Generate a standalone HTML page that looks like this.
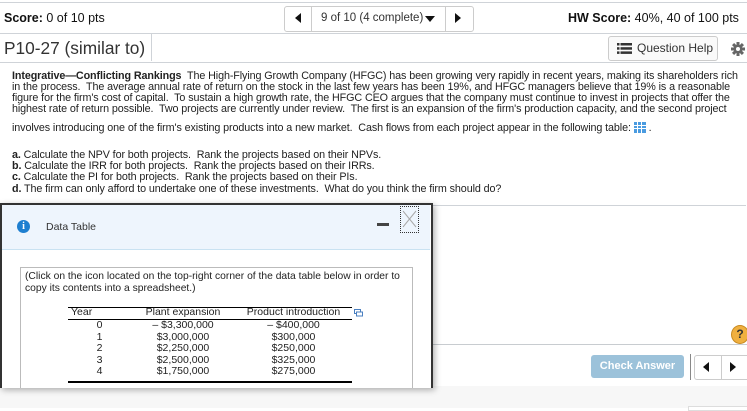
<!DOCTYPE html>
<html><head><style>
body{margin:0;width:747px;height:408px;position:relative;overflow:hidden;background:#fff;font-family:"Liberation Sans",Arial,sans-serif;color:#222}
.a{position:absolute;white-space:nowrap}
.hl{position:absolute;height:1px;background:#cfd3d8}
.t{font-size:10.75px;letter-spacing:-0.1px;left:12px;position:absolute;white-space:nowrap;color:#222}
td{padding:0;line-height:11.5px;font-size:10.5px}
</style></head><body>
<div class="hl" style="top:2px;left:0;width:747px"></div>
<div class="a" style="left:4px;top:11px;font-size:12.5px;color:#111"><b>Score:</b> 0 of 10 pts</div>
<div class="a" style="left:284px;top:6px;width:188px;height:24px;border:1px solid #ccc;border-radius:3px;background:#fff"></div>
<div class="a" style="left:311px;top:6px;width:1px;height:25px;background:#ccc"></div>
<div class="a" style="left:445px;top:6px;width:1px;height:25px;background:#ccc"></div>
<div class="a" style="left:295px;top:13px;border-right:6px solid #111;border-top:5px solid transparent;border-bottom:5px solid transparent"></div>
<div class="a" style="left:455px;top:13px;border-left:6px solid #111;border-top:5px solid transparent;border-bottom:5px solid transparent"></div>
<div class="a" style="left:321px;top:12px;font-size:11.5px;color:#333">9 of 10 (4 complete)</div>
<div class="a" style="left:425px;top:16px;border-top:6px solid #111;border-left:5px solid transparent;border-right:5px solid transparent"></div>
<div class="a" style="left:568px;top:11px;font-size:12.5px;color:#111"><b>HW Score:</b> 40%, 40 of 100 pts</div>
<div class="hl" style="top:33px;left:0;width:747px"></div>
<div class="a" style="left:4px;top:38px;font-size:17.3px;color:#333">P10-27 (similar to)</div>
<div class="a" style="left:151px;top:34px;width:1px;height:27px;background:#cfd3d8"></div>
<div class="a" style="left:608px;top:36px;width:108px;height:23px;border:1px solid #ccc;border-radius:3px;background:#fafafa"></div>
<svg class="a" style="left:617px;top:43px" width="15" height="11"><g fill="#333"><rect x="0" y="0" width="2.5" height="2.5"/><rect x="0" y="4.2" width="2.5" height="2.5"/><rect x="0" y="8.4" width="2.5" height="2.5"/><rect x="3.5" y="0" width="11.5" height="2.5"/><rect x="3.5" y="4.2" width="11.5" height="2.5"/><rect x="3.5" y="8.4" width="11.5" height="2.5"/></g></svg>
<div class="a" style="left:637px;top:41px;font-size:12px;color:#333">Question Help</div>
<svg class="a" style="left:731px;top:42px" width="14" height="14" viewBox="0 0 14 14"><g fill="#666"><circle cx="7" cy="7" r="4.5"/><rect x="5.5" y="0" width="3" height="14"/><rect x="0" y="5.5" width="14" height="3"/><rect x="5.5" y="0" width="3" height="14" transform="rotate(45 7 7)"/><rect x="5.5" y="0" width="3" height="14" transform="rotate(-45 7 7)"/></g><circle cx="7" cy="7" r="2" fill="#fff"/></svg>
<div class="hl" style="top:62px;left:0;width:747px"></div>

<div class="t" style="top:70px"><b>Integrative—Conflicting Rankings</b>&nbsp; The High-Flying Growth Company (HFGC) has been growing very rapidly in recent years, making its shareholders rich</div>
<div class="t" style="top:81px">in the process.&nbsp; The average annual rate of return on the stock in the last few years has been 19%, and HFGC managers believe that 19% is a reasonable</div>
<div class="t" style="top:92px">figure for the firm's cost of capital.&nbsp; To sustain a high growth rate, the HFGC CEO argues that the company must continue to invest in projects that offer the</div>
<div class="t" style="top:103px">highest rate of return possible.&nbsp; Two projects are currently under review.&nbsp; The first is an expansion of the firm's production capacity, and the second project</div>
<div class="t" style="top:122px">involves introducing one of the firm's existing products into a new market.&nbsp; Cash flows from each project appear in the following table: <span style="display:inline-block;width:12px;height:11px;background:#4a9be0;vertical-align:-2px;background-image:linear-gradient(90deg,transparent 3px,#fff 3px,#fff 4px,transparent 4px,transparent 7px,#fff 7px,#fff 8px,transparent 8px),linear-gradient(transparent 3px,#fff 3px,#fff 4px,transparent 4px,transparent 6px,#fff 6px,#fff 7px,transparent 7px)"></span> .</div>
<div class="t" style="top:149px"><b>a.</b> Calculate the NPV for both projects.&nbsp; Rank the projects based on their NPVs.</div>
<div class="t" style="top:160px"><b>b.</b> Calculate the IRR for both projects.&nbsp; Rank the projects based on their IRRs.</div>
<div class="t" style="top:171px"><b>c.</b> Calculate the PI for both projects.&nbsp; Rank the projects based on their PIs.</div>
<div class="t" style="top:183px"><b>d.</b> The firm can only afford to undertake one of these investments.&nbsp; What do you think the firm should do?</div>

<div class="hl" style="top:205px;left:430px;width:316px"></div>
<div class="hl" style="top:344px;left:430px;width:317px;background:#c8ccd0"></div>
<div class="a" style="left:731px;top:325px;width:16px;height:17px;border-radius:50%;background:#f0b040;border:1px solid #c88a20;font-size:12px;font-weight:bold;text-align:center;line-height:17px;color:#333">?</div>
<div class="a" style="left:591px;top:355px;width:93px;height:23px;border-radius:3px;background:#9cc2da;color:#fff;font-size:11px;font-weight:bold;text-align:center;line-height:23px">Check Answer</div>
<div class="a" style="left:690px;top:354px;width:1px;height:26px;background:#888"></div>
<div class="a" style="left:694px;top:355px;width:54px;height:23px;border:1px solid #ccc;border-radius:3px"></div>
<div class="a" style="left:721px;top:355px;width:1px;height:24px;background:#ccc"></div>
<div class="a" style="left:703px;top:362px;border-right:6px solid #111;border-top:5px solid transparent;border-bottom:5px solid transparent"></div>
<div class="a" style="left:730px;top:362px;border-left:6px solid #111;border-top:5px solid transparent;border-bottom:5px solid transparent"></div>
<div class="a" style="left:0;top:386px;width:747px;height:22px;background:#f7f7f7"></div>
<div class="a" style="left:688px;top:406px;width:59px;height:3px;border:1px solid #ddd;background:#fff"></div>

<div class="a" style="left:0;top:203px;width:429px;height:183px;border:2px solid #333;border-bottom:none;background:#fff;box-shadow:2px 2px 6px rgba(0,0,0,.3)"></div>
<div class="a" style="left:2px;top:205px;width:428px;height:44px;background:#eef5fd;border-bottom:1px solid #c9e2f2"></div>
<div class="a" style="left:17px;top:220px;width:13px;height:13px;border-radius:50%;background:#1e7fd0;color:#fff;font:bold 10px 'Liberation Serif',serif;text-align:center;line-height:13px">i</div>
<div class="a" style="left:46px;top:221px;font-size:10.5px;color:#333">Data Table</div>
<div class="a" style="left:377px;top:223px;width:12px;height:3px;background:#444"></div>
<div class="a" style="left:400px;top:206px;width:17px;height:25px;border:1px dotted #333"></div>
<svg class="a" style="left:402px;top:210px" width="15" height="18"><path d="M1 1L14 17M14 1L1 17" stroke="#aaa" stroke-width="1"/></svg>
<div class="a" style="left:20px;top:267px;width:391px;height:120px;border:1px solid #bbb;border-bottom:none"></div>
<div class="a" style="left:25px;top:271px;font-size:10.3px;line-height:12px;color:#222">(Click on the icon located on the top-right corner of the data table below in order to<br>copy its contents into a spreadsheet.)</div>
<div class="a" style="left:68px;top:307px;width:284px;height:73px;border-top:1px solid #000;border-bottom:2px solid #000"></div>
<div class="a" style="left:68px;top:319px;width:284px;height:1px;background:#000"></div>
<table class="a" style="left:68px;top:307px;border-collapse:collapse;width:284px">
<tr style="height:12px"><td style="width:60px;padding-left:3px;text-align:left">Year</td><td style="width:104px;text-align:center">Plant expansion</td><td style="text-align:center">Product introduction</td></tr>
<tr><td style="text-align:center;padding-top:1px">0</td><td style="text-align:center">– $3,300,000</td><td style="text-align:center">– $400,000</td></tr>
<tr><td style="text-align:center">1</td><td style="text-align:center">$3,000,000</td><td style="text-align:center">$300,000</td></tr>
<tr><td style="text-align:center">2</td><td style="text-align:center">$2,250,000</td><td style="text-align:center">$250,000</td></tr>
<tr><td style="text-align:center">3</td><td style="text-align:center">$2,500,000</td><td style="text-align:center">$325,000</td></tr>
<tr><td style="text-align:center">4</td><td style="text-align:center">$1,750,000</td><td style="text-align:center">$275,000</td></tr>
</table>
<svg class="a" style="left:354px;top:309px" width="9" height="8"><rect x="0.5" y="0.5" width="6" height="4" fill="none" stroke="#4a7fc0"/><rect x="2.5" y="3" width="6" height="4" fill="#fff" stroke="#4a7fc0"/></svg>
</body></html>
